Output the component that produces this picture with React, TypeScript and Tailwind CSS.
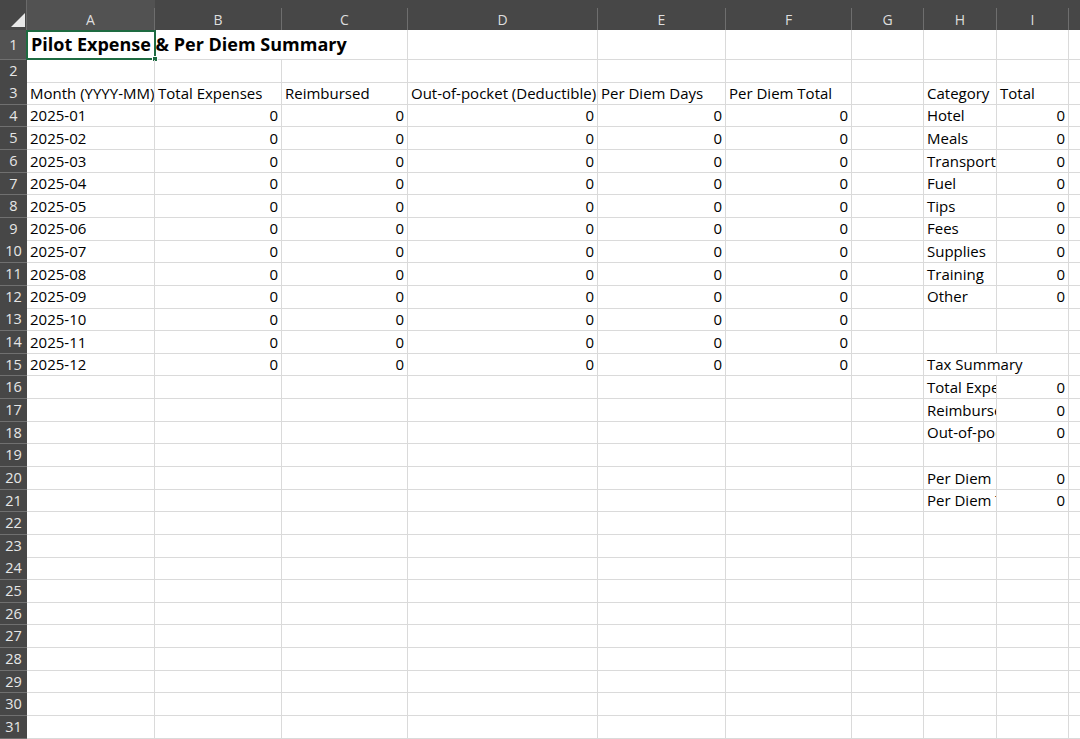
import React from "react";

const COLS = ["A", "B", "C", "D", "E", "F", "G", "H", "I", "J"];
const months = ["2025-01","2025-02","2025-03","2025-04","2025-05","2025-06","2025-07","2025-08","2025-09","2025-10","2025-11","2025-12"];
const cats = ["Hotel","Meals","Transportation","Fuel","Tips","Fees","Supplies","Training","Other"];

type C = { t?: string; r?: boolean; span?: number; bold?: boolean };

function buildRow(n: number): C[] {
  const row: C[] = [];
  if (n === 1) {
    row.push({ t: "Pilot Expense & Per Diem Summary", span: 3, bold: true });
    for (let i = 0; i < 7; i++) row.push({});
    return row;
  }
  if (n === 3) {
    return [
      { t: "Month (YYYY-MM)" },
      { t: "Total Expenses" },
      { t: "Reimbursed" },
      { t: "Out-of-pocket (Deductible)" },
      { t: "Per Diem Days" },
      { t: "Per Diem Total" },
      {},
      { t: "Category" },
      { t: "Total" },
      {},
    ];
  }
  const cells: C[] = [];
  if (n >= 4 && n <= 15) {
    cells.push({ t: months[n - 4] });
    for (let i = 0; i < 5; i++) cells.push({ t: "0", r: true });
  } else {
    for (let i = 0; i < 6; i++) cells.push({});
  }
  cells.push({});
  const side: Record<number, string> = { 16: "Total Expenses", 17: "Reimbursed", 18: "Out-of-pocket", 20: "Per Diem Days", 21: "Per Diem Total" };
  if (n >= 4 && n <= 12) {
    cells.push({ t: cats[n - 4] });
    cells.push({ t: "0", r: true });
  } else if (n === 15) {
    cells.push({ t: "Tax Summary", span: 2 });
  } else if (side[n]) {
    cells.push({ t: side[n] });
    cells.push({ t: "0", r: true });
  } else {
    cells.push({});
    cells.push({});
  }
  cells.push({});
  return cells;
}

const spanCls: Record<number, string> = { 1: "", 2: "col-span-2", 3: "col-span-3" };

export default function App() {
  const rows = Array.from({ length: 31 }, (_, i) => i + 1);
  const grid = "grid w-[1141px] grid-cols-[27px_128px_127px_126px_190px_128px_126px_72px_73px_72px_72px]";
  return (
    <div className="w-[1080px] h-[739px] overflow-hidden bg-white text-black" style={{ fontFamily: "'Open Sans', 'Noto Sans', sans-serif" }}>
      {/* column headers */}
      <div className={`${grid} h-[30px] bg-[#474747]`}>
        <div className="relative h-[30px] border-r border-[#6a6a6a]">
          <svg className="absolute left-[10px] top-[12px]" width="16" height="16" viewBox="0 0 16 16">
            <polygon points="15,1 15,15 1,15" fill="#e8e8e8" />
          </svg>
        </div>
        {COLS.map((c, i) => (
          <div key={c} className={`flex flex-col h-[30px] ${i === 0 ? "bg-[#525252]" : ""}`}>
            <div className="h-[8px]" />
            <div className="flex-1 flex items-center justify-center border-r border-[#6e6e6e] text-[14px] text-[#dedede]">
              {c}
            </div>
          </div>
        ))}
      </div>
      {rows.map((n) => {
        const h = n === 1 ? "h-[30px]" : n === 2 ? "h-[22px]" : "h-[22.65px]";
        const cells = buildRow(n);
        return (
          <div key={n} className={`${grid} ${h} relative`}>
            <div className={`flex items-center justify-center border-b border-[#707070] text-[14.5px] text-[#e6e6e6] ${n === 1 ? "bg-[#525252]" : "bg-[#474747]"}`}>
              {n}
            </div>
            {cells.map((c, i) => (
              <div
                key={i}
                className={`${spanCls[c.span ?? 1]} flex items-center overflow-hidden whitespace-nowrap border-r border-b border-[#dadada] px-[3px] ${c.r ? "justify-end" : ""} ${c.bold ? "font-bold text-[18px] pl-[4px]" : "text-[15px]"}`}
              >
                {c.t}
              </div>
            ))}
            {n === 1 && (
              <div className="absolute left-[26px] top-0 w-[130px] h-[30px] border-2 border-[#1e6b41] pointer-events-none">
                <div className="absolute right-[-4px] bottom-[-4px] w-[6px] h-[6px] bg-[#1e6b41] border border-white" />
              </div>
            )}
          </div>
        );
      })}
    </div>
  );
}
